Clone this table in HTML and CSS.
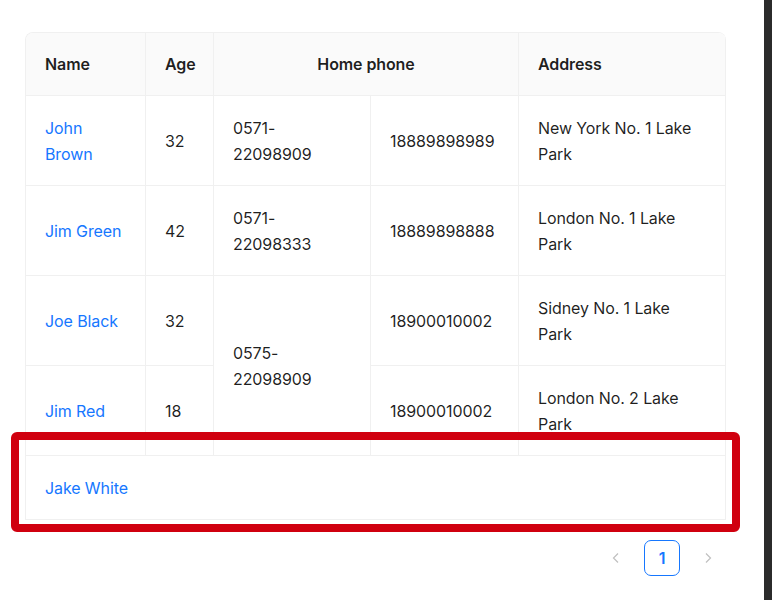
FILE: index.html
```html
<!DOCTYPE html>
<html lang="en">
<head>
<meta charset="utf-8">
<title>Table</title>
<link rel="stylesheet" href="styles.css">
</head>
<body>
<div class="page">
  <div class="table-wrap">
    <table class="table">
      <colgroup>
        <col class="c-name"><col class="c-age"><col class="c-ph1"><col class="c-ph2"><col class="c-addr">
      </colgroup>
      <thead>
        <tr class="head-row">
          <th>Name</th>
          <th>Age</th>
          <th colspan="2" class="center">Home phone</th>
          <th>Address</th>
        </tr>
      </thead>
      <tbody>
        <tr class="row">
          <td><a href="#">John Brown</a></td>
          <td>32</td>
          <td>0571-22098909</td>
          <td>18889898989</td>
          <td>New York No. 1 Lake Park</td>
        </tr>
        <tr class="row">
          <td><a href="#">Jim Green</a></td>
          <td>42</td>
          <td>0571-22098333</td>
          <td>18889898888</td>
          <td>London No. 1 Lake Park</td>
        </tr>
        <tr class="row">
          <td><a href="#">Joe Black</a></td>
          <td>32</td>
          <td rowspan="2">0575-22098909</td>
          <td>18900010002</td>
          <td>Sidney No. 1 Lake Park</td>
        </tr>
        <tr class="row">
          <td><a href="#">Jim Red</a></td>
          <td>18</td>
          <td>18900010002</td>
          <td>London No. 2 Lake Park</td>
        </tr>
        <tr class="last-row">
          <td colspan="5"><a href="#">Jake White</a></td>
        </tr>
      </tbody>
    </table>
  </div>
  <nav class="pagination">
    <span class="pg-btn disabled">
      <svg width="12" height="12" viewBox="0 0 12 12"><path d="M8 1.5 3.5 6 8 10.5" fill="none" stroke="currentColor" stroke-width="1.2"/></svg>
    </span>
    <span class="pg-item active">1</span>
    <span class="pg-btn disabled">
      <svg width="12" height="12" viewBox="0 0 12 12"><path d="M4 1.5 8.5 6 4 10.5" fill="none" stroke="currentColor" stroke-width="1.2"/></svg>
    </span>
  </nav>
  <div class="highlight"></div>
</div>
<div class="side-strip"></div>
</body>
</html>
```
FILE: styles.css
```css
* { box-sizing: border-box; }
html, body { margin: 0; padding: 0; background: #fff; }
body {
  font-family: Inter, "Liberation Sans", Arial, sans-serif;
  font-size: 16px;
  color: rgba(0, 0, 0, 0.88);
  letter-spacing: -0.1px;
}
.page {
  position: relative;
  padding: 32px 0 0 25px;
  width: 764px;
  height: 600px;
}
.table-wrap {
  width: 701px;
  border-left: 1px solid #f0f0f0;
  border-top: 1px solid #f0f0f0;
  border-radius: 8px 8px 0 0;
  overflow: hidden;
}
.table {
  width: 700px;
  table-layout: fixed;
  border-collapse: separate;
  border-spacing: 0;
}
.c-name { width: 120px; }
.c-age { width: 68px; }
.c-ph1 { width: 157px; }
.c-ph2 { width: 148px; }
.c-addr { width: 207px; }
.head-row { height: 63px; }
.row { height: 90px; }
.last-row { height: 64px; }
.table th, .table td {
  padding: 0 19px;
  line-height: 26px;
  border-right: 1px solid #f0f0f0;
  border-bottom: 1px solid #f0f0f0;
  text-align: left;
  vertical-align: middle;
  font-weight: 400;
}
.table th {
  background: #fafafa;
  font-weight: 600;
  color: rgba(0, 0, 0, 0.88);
}
.table th.center { text-align: center; }
.table a { color: #1677ff; text-decoration: none; }
.pagination {
  display: flex;
  justify-content: flex-end;
  align-items: center;
  gap: 10px;
  width: 701px;
  margin-top: 20px;
}
.pg-btn, .pg-item {
  width: 36px;
  height: 36px;
  display: flex;
  align-items: center;
  justify-content: center;
  border-radius: 7px;
}
.pg-btn.disabled { color: rgba(0, 0, 0, 0.25); }
.pg-item.active {
  border: 1px solid #1677ff;
  color: #1677ff;
  font-weight: 600;
}
.highlight {
  position: absolute;
  left: 11px;
  top: 432px;
  width: 729px;
  height: 100px;
  border: 8px solid #d0000f;
  border-radius: 6px;
}
.side-strip {
  position: fixed;
  top: 0;
  right: 0;
  width: 8px;
  height: 100%;
  background: #2b2b2b;
}
```
